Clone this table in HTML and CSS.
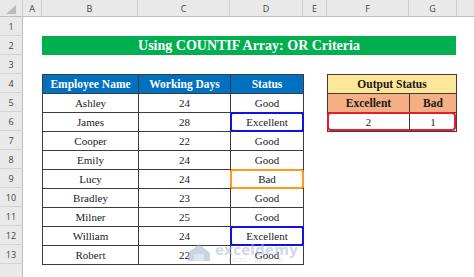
FILE: index.html
```html
<!DOCTYPE html>
<html>
<head>
<meta charset="utf-8">
<link rel="stylesheet" href="styles.css">
</head>
<body>
<div class="sheet">
  <div class="corner"><svg width="10" height="9" viewBox="0 0 10 9"><polygon points="10,0 10,9 0,9" fill="#bcbcbc"/></svg></div>
  <div class="ch">A</div><div class="ch">B</div><div class="ch">C</div><div class="ch">D</div><div class="ch">E</div><div class="ch">F</div><div class="ch">G</div><div class="ch last"></div>

  <div class="rh r1">1</div><div class="rh r2">2</div><div class="rh r3">3</div><div class="rh r4">4</div><div class="rh r5">5</div><div class="rh r6">6</div><div class="rh r7">7</div><div class="rh r8">8</div><div class="rh r9">9</div><div class="rh r10">10</div><div class="rh r11">11</div><div class="rh r12">12</div><div class="rh r13">13</div><div class="rh r14"></div>

  <div class="title">Using COUNTIF Array: OR Criteria</div>

  <table class="main">
    <colgroup><col class="cb"><col class="cc"><col class="cd"></colgroup>
    <tr class="head"><th>Employee Name</th><th>Working Days</th><th>Status</th></tr>
    <tr><td>Ashley</td><td>24</td><td>Good</td></tr>
    <tr><td>James</td><td>28</td><td class="hl"><span class="box blue"></span>Excellent</td></tr>
    <tr><td>Cooper</td><td>22</td><td>Good</td></tr>
    <tr><td>Emily</td><td>24</td><td>Good</td></tr>
    <tr><td>Lucy</td><td>24</td><td class="hl"><span class="box orange"></span>Bad</td></tr>
    <tr><td>Bradley</td><td>23</td><td>Good</td></tr>
    <tr><td>Milner</td><td>25</td><td>Good</td></tr>
    <tr><td>William</td><td>24</td><td class="hl"><span class="box blue"></span>Excellent</td></tr>
    <tr><td>Robert</td><td>22</td><td>Good</td></tr>
  </table>

  <div class="outwrap">
    <table class="out">
      <colgroup><col class="cf"><col class="cg"></colgroup>
      <tr class="ohead"><th colspan="2">Output Status</th></tr>
      <tr class="osub"><th>Excellent</th><th>Bad</th></tr>
      <tr><td>2</td><td>1</td></tr>
    </table>
    <span class="box red"></span>
  </div>

  <div class="mark">
    <svg class="logo" width="26" height="22" viewBox="0 0 26 22"><path d="M2 12 L13 3 L24 12 L24 20 L2 20 Z" fill="#9fb3cf"/><path d="M8 20 L8 13 L18 13 L18 20 Z" fill="#c7d3e6"/></svg>
    <div class="marktext"><div class="mname">exceldemy</div><div class="msub">EXCEL · DATA · BI</div></div>
  </div>
</div>
</body>
</html>
```

FILE: styles.css
```css
html, body {
  margin: 0;
  padding: 0;
  background: #ffffff;
}
.sheet {
  position: relative;
  width: 474px;
  height: 277px;
  overflow: hidden;
  display: grid;
  grid-template-columns: 23px 19px 96px 92px 73px 24px 82px 48px 1fr;
  grid-template-rows: 17px repeat(14, 19px);
  font-family: "Liberation Serif", "Times New Roman", serif;
}
.corner {
  grid-column: 1;
  grid-row: 1;
  background: #e9e9e9;
  border-right: 1px solid #cfcfcf;
  border-bottom: 1px solid #bdbdbd;
  display: flex;
  align-items: flex-end;
  justify-content: flex-end;
  padding: 0 6px 2px 0;
}
.ch {
  grid-row: 1;
  background: #e9e9e9;
  border-right: 1px solid #cfcfcf;
  border-bottom: 1px solid #bdbdbd;
  font-family: "Open Sans", "Liberation Sans", sans-serif;
  font-size: 9px;
  color: #444;
  display: flex;
  align-items: center;
  justify-content: center;
}
.ch.last { border-right: none; }
.rh {
  grid-column: 1;
  background: #e9e9e9;
  border-right: 1px solid #bdbdbd;
  border-bottom: 1px solid #d4d4d4;
  font-family: "Open Sans", "Liberation Sans", sans-serif;
  font-size: 9px;
  color: #444;
  display: flex;
  align-items: center;
  justify-content: center;
}
.r1 { grid-row: 2; } .r2 { grid-row: 3; } .r3 { grid-row: 4; } .r4 { grid-row: 5; }
.r5 { grid-row: 6; } .r6 { grid-row: 7; } .r7 { grid-row: 8; } .r8 { grid-row: 9; }
.r9 { grid-row: 10; } .r10 { grid-row: 11; } .r11 { grid-row: 12; } .r12 { grid-row: 13; }
.r13 { grid-row: 14; } .r14 { grid-row: 15; }

.title {
  grid-column: 3 / 9;
  grid-row: 3;
  margin-right: 1px;
  background: #00b050;
  color: #ffffff;
  font-weight: bold;
  font-size: 14px;
  display: flex;
  align-items: center;
  justify-content: center;
}

table {
  border-collapse: collapse;
  table-layout: fixed;
}
.main {
  grid-column: 3 / 6;
  grid-row: 5 / 15;
  width: 261px;
  height: 190px;
}
.cb { width: 96px; } .cc { width: 92px; } .cd { width: 73px; }
.main th, .main td, .out th, .out td {
  border: 1px solid #3c3c3c;
  height: 18px;
  padding: 0;
  text-align: center;
  line-height: 18px;
}
.main td, .out td {
  font-size: 11px;
  color: #1a1a1a;
}
.main th {
  background: #0070c0;
  color: #ffffff;
  font-size: 11.5px;
  font-weight: bold;
}
.hl { position: relative; }
.box {
  position: absolute;
  top: -1px; left: -1px; right: -1px; bottom: -1px;
  border: 2px solid;
  border-radius: 3px;
  pointer-events: none;
}
.blue { border-color: #1010e8; }
.orange { border-color: #ff9a1a; }
.red { border-color: #e81c2c; top: 38px; bottom: 0; left: 0; right: 0; border-radius: 4px; }

.outwrap {
  grid-column: 7 / 9;
  grid-row: 5 / 8;
  position: relative;
  margin-right: 1px;
}
.out {
  width: 129px;
  height: 57px;
}
.cf { width: 82px; } .cg { width: 47px; }
.ohead th {
  background: #ffe699;
  color: #1a1a1a;
  font-size: 11.5px;
  font-weight: bold;
}
.osub th {
  background: #f4b084;
  color: #1a1a1a;
  font-size: 11.5px;
  font-weight: bold;
}

.mark {
  position: absolute;
  left: 186px;
  top: 241px;
  display: flex;
  align-items: center;
  gap: 3px;
  opacity: 0.55;
}
.marktext {
  display: flex;
  flex-direction: column;
  align-items: center;
}
.mname {
  font-family: "Open Sans", "Liberation Sans", sans-serif;
  font-size: 15px;
  font-weight: bold;
  color: #a9bad6;
  line-height: 15px;
  letter-spacing: 0.3px;
}
.msub {
  font-family: "Open Sans", "Liberation Sans", sans-serif;
  font-size: 5px;
  color: #b7c3d8;
  letter-spacing: 1px;
  line-height: 6px;
}
```
